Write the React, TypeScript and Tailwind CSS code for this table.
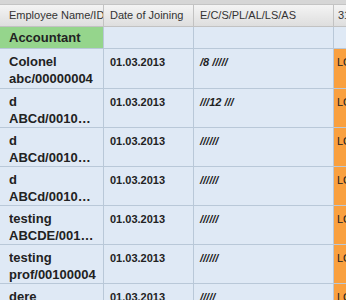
const rows = [
  { name: "Colonel", id: "abc/00000004", date: "01.03.2013", code: "/8 /////" },
  { name: "d", id: "ABCd/00100001", date: "01.03.2013", code: "///12 ///" },
  { name: "d", id: "ABCd/00100002", date: "01.03.2013", code: "//////" },
  { name: "d", id: "ABCd/00100003", date: "01.03.2013", code: "//////" },
  { name: "testing", id: "ABCDE/00100005", date: "01.03.2013", code: "//////" },
  { name: "testing", id: "prof/00100004", date: "01.03.2013", code: "//////" },
  { name: "dere", id: "abc/00100006", date: "01.03.2013", code: "/////" },
];

const cell = "border-r border-b border-[#b9c8d8] overflow-hidden";

export default function App() {
  return (
    <div className="w-[346px] h-[300px] overflow-hidden bg-[#dfe9f5] font-['Liberation_Sans',Arial,sans-serif] text-[#222]">
      <div className="h-[5px] bg-[#d6d6d6] border-b border-[#c4c4c4]" />
      <div className="grid grid-cols-[104px_90px_140px_40px]">
        {/* header */}
        <div className="h-[22px] flex items-center pl-[9px] pr-1 text-[11px] text-[#333] whitespace-nowrap overflow-hidden bg-gradient-to-b from-[#f4f4f4] to-[#dedede] border-r border-b border-[#c2c2c2]">
          Employee Name/ID
        </div>
        <div className="h-[22px] flex items-center pl-[6px] text-[11px] text-[#333] whitespace-nowrap overflow-hidden bg-gradient-to-b from-[#f4f4f4] to-[#dedede] border-r border-b border-[#c2c2c2]">
          Date of Joining
        </div>
        <div className="h-[22px] flex items-center pl-[6px] text-[11px] text-[#333] whitespace-nowrap overflow-hidden bg-gradient-to-b from-[#f4f4f4] to-[#dedede] border-r border-b border-[#c2c2c2]">
          E/C/S/PL/AL/LS/AS
        </div>
        <div className="h-[22px] flex items-center pl-[4px] text-[11px] text-[#333] whitespace-nowrap overflow-hidden bg-gradient-to-b from-[#f4f4f4] to-[#dedede] border-b border-[#c2c2c2]">
          31.03.2013
        </div>

        {/* group row */}
        <div className={`h-[22px] flex items-center pl-[9px] bg-[#95d58c] text-[13px] font-bold ${cell}`}>
          Accountant
        </div>
        <div className={`h-[22px] ${cell}`} />
        <div className={`h-[22px] ${cell}`} />
        <div className="h-[22px] border-b border-[#b9c8d8]" />

        {rows.map((r, i) => (
          <div key={i} className="contents">
            <div className={`${i === 0 ? "h-[40px]" : "h-[39px]"} pl-[9px] pr-[6px] pt-[4px] text-[13px] font-bold leading-[17px] ${cell}`}>
              <div className="truncate">{r.name}</div>
              <div className="truncate">{r.id}</div>
            </div>
            <div className={`pl-[6px] pt-[7px] text-[11px] font-bold leading-[13px] whitespace-nowrap ${cell}`}>
              {r.date}
            </div>
            <div className={`pl-[6px] pt-[7px] text-[11px] font-bold italic leading-[13px] whitespace-nowrap ${cell}`}>
              {r.code}
            </div>
            <div className="pl-[3px] pt-[7px] text-[11px] leading-[13px] whitespace-nowrap bg-[#f9a03f] border-b border-[#b9c8d8] overflow-hidden">
              LOP
            </div>
          </div>
        ))}
      </div>
    </div>
  );
}
